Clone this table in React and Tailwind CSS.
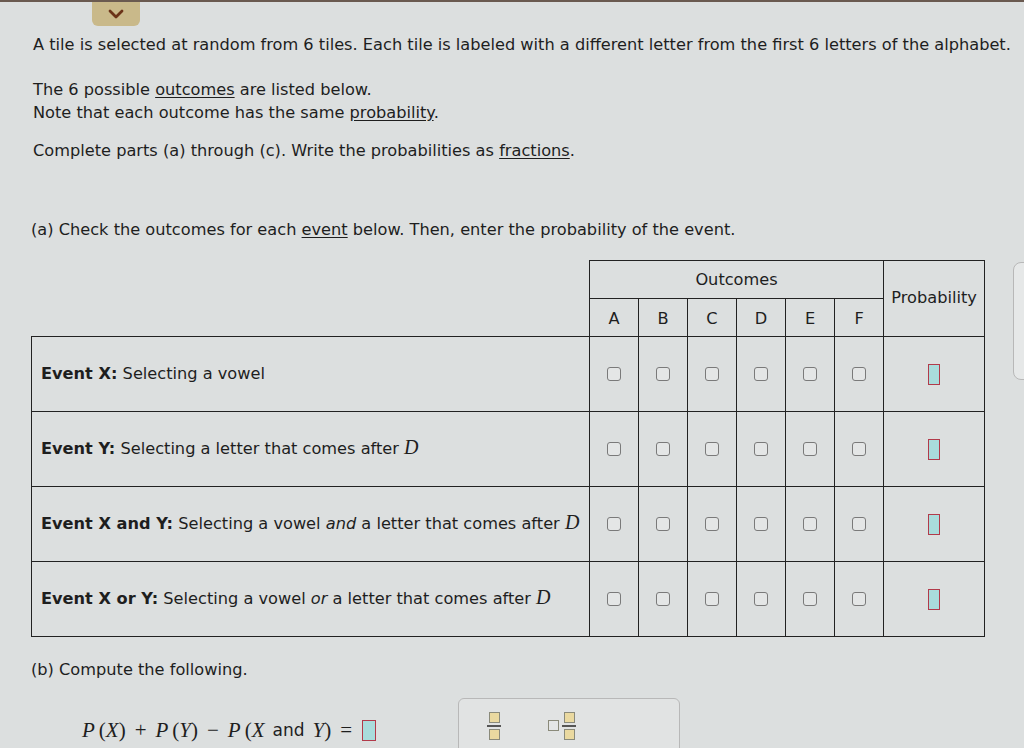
import React from 'react';

const sans = { fontFamily: '"DejaVu Sans", Verdana, sans-serif' };

const Check = () => (
  <span className="inline-block w-[14px] h-[14px] rounded-[3px] border-[1.5px] border-[#7a7a7a] bg-[#e4e6e6]" />
);

const Answer = ({ className = '' }) => (
  <span className={`inline-block w-[12px] h-[21px] border-[1.5px] border-[#b23a4a] bg-[#a9dcdc] ${className}`} />
);

const D = () => <span className="font-['Liberation_Serif'] italic text-[20px] leading-none">D</span>;

const events = [
  { label: 'Event X:', text: <>Selecting a vowel</> },
  { label: 'Event Y:', text: <>Selecting a letter that comes after <D /></> },
  { label: 'Event X and Y:', text: <>Selecting a vowel <i>and</i> a letter that comes after <D /></> },
  { label: 'Event X or Y:', text: <>Selecting a vowel <i>or</i> a letter that comes after <D /></> },
];

const letters = ['A', 'B', 'C', 'D', 'E', 'F'];

const FracIcon = () => (
  <span className="inline-flex flex-col items-center gap-[2px]">
    <span className="w-[11px] h-[11px] border border-[#8a8a7a] bg-[#ead9a0]" />
    <span className="w-[14px] h-[1.5px] bg-[#555]" />
    <span className="w-[11px] h-[11px] border border-[#8a8a7a] bg-[#ead9a0]" />
  </span>
);

export default function App() {
  return (
    <div className="w-[1024px] h-[748px] overflow-hidden bg-[#dcdfdf] text-[#1e1e1e] relative" style={sans}>
      <div className="h-[2px] bg-[#6a5a50]" />
      {/* collapse tab */}
      <div className="ml-[92px] w-[48px] h-[24px] rounded-b-md bg-[#c9b98a] flex items-center justify-center">
        <svg width="16" height="10" viewBox="0 0 16 10">
          <path d="M2 2 L8 8 L14 2" stroke="#6b3318" strokeWidth="2.8" fill="none" strokeLinecap="round" strokeLinejoin="round" />
        </svg>
      </div>

      <div className="pl-[33px] text-[16.2px]">
        <p className="mt-[9px] leading-5">
          A tile is selected at random from 6 tiles. Each tile is labeled with a different letter from the first 6 letters of the alphabet.
        </p>
        <p className="mt-[23px] leading-[23px]">
          The 6 possible <span className="underline underline-offset-2">outcomes</span> are listed below.
          <br />
          Note that each outcome has the same <span className="underline underline-offset-2">probability</span>.
        </p>
        <p className="mt-[17px] leading-5">
          Complete parts (a) through (c). Write the probabilities as <span className="underline underline-offset-2">fractions</span>.
        </p>
      </div>

      <div className="pl-[31px] text-[16.2px]">
        <p className="mt-[59px] leading-5">
          (a) Check the outcomes for each <span className="underline underline-offset-2">event</span> below. Then, enter the probability of the event.
        </p>

        <div className="mt-[20px] flex items-start">
          <table className="table-fixed w-[953px] shrink-0 border-collapse">
            <colgroup>
              <col className="w-[558px]" />
              {letters.map((l) => (
                <col key={l} className="w-[49px]" />
              ))}
              <col className="w-[101px]" />
            </colgroup>
            <thead>
              <tr className="h-[38px]">
                <th rowSpan={2} className="p-0" />
                <th colSpan={6} className="border-[1.5px] border-[#222] font-normal pt-[2px]">Outcomes</th>
                <th rowSpan={2} className="border-[1.5px] border-[#222] font-normal">Probability</th>
              </tr>
              <tr className="h-[38px]">
                {letters.map((l) => (
                  <th key={l} className="border-[1.5px] border-[#222] font-normal pt-[3px]">{l}</th>
                ))}
              </tr>
            </thead>
            <tbody>
              {events.map((e, i) => (
                <tr key={i} className="h-[75px]">
                  <td className="border-[1.5px] border-[#222] pl-[9px] text-left whitespace-nowrap">
                    <b>{e.label}</b> {e.text}
                  </td>
                  {letters.map((l) => (
                    <td key={l} className="border-[1.5px] border-[#222] text-center align-middle">
                      <div className="flex justify-center"><Check /></div>
                    </td>
                  ))}
                  <td className="border-[1.5px] border-[#222] text-center">
                    <div className="flex justify-center"><Answer /></div>
                  </td>
                </tr>
              ))}
            </tbody>
          </table>
          <div className="ml-[28px] mt-[2px] w-[60px] h-[118px] shrink-0 rounded-lg border-[1.5px] border-[#b8b8b8] bg-[#e6e8e8]" />
        </div>

        <p className="mt-[23px] leading-5">(b) Compute the following.</p>

        <div className="mt-[18px] flex items-start">
          <div className="w-[427px] pl-[51px] pt-[17px] flex items-center text-[21px] font-['Liberation_Serif'] whitespace-nowrap">
            <i>P</i><span className="ml-[4px]">(</span><i>X</i>)<span className="mx-[9px]">+</span>
            <i>P</i><span className="ml-[4px]">(</span><i>Y</i>)<span className="mx-[9px]">−</span>
            <i>P</i><span className="ml-[4px]">(</span><i>X</i>
            <span className="mx-[8px] text-[17px]" style={sans}>and</span>
            <i>Y</i>)<span className="mx-[9px]">=</span>
            <Answer className="ml-[1px] w-[14px]" />
          </div>
          <div className="w-[222px] h-[80px] rounded-md border-[1.5px] border-[#b8b8b8] bg-[#e1e3e3] flex items-start pt-[13px] pl-[28px] gap-[47px]">
            <FracIcon />
            <span className="flex items-center gap-[3px]">
              <span className="w-[11px] h-[11px] border border-[#8a8a7a] bg-[#e4e6e6]" />
              <FracIcon />
            </span>
          </div>
        </div>
      </div>
    </div>
  );
}
